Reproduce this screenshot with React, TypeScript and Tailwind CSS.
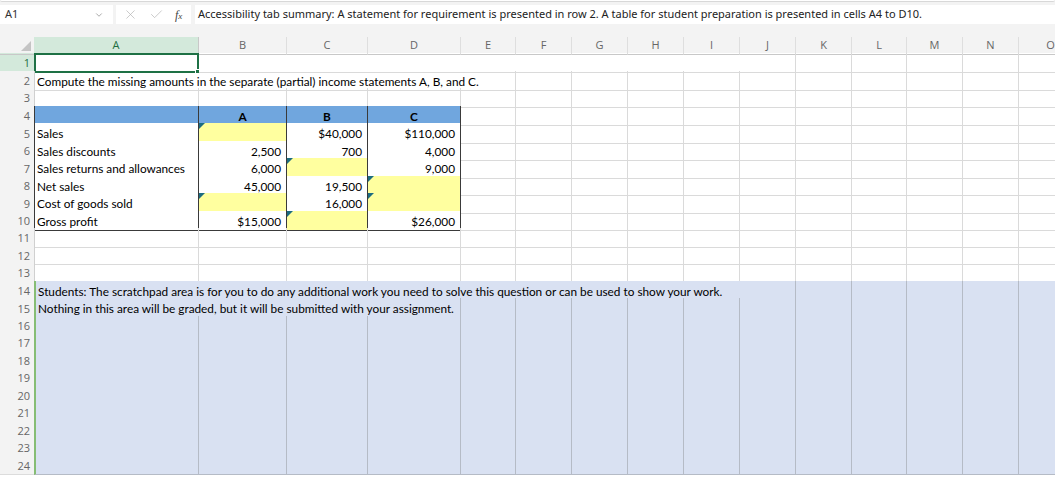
import React from "react";
import { Check, ChevronDown, X } from "lucide-react";

type Kind = "grid" | "sel" | "aboveTable" | "table" | "head" | "yellow" | "aboveScratch" | "scratch";

type Cell = {
  kind: Kind;
  span?: number;
  text?: string;
  align?: "left" | "right" | "center";
  tri?: boolean;
};

const COLS =
  "grid grid-cols-[34px_165px_88px_81px_93px_55px_56px_56px_56px_56px_56px_56px_55px_56px_56px_64px]";

const LETTERS = ["A", "B", "C", "D", "E", "F", "G", "H", "I", "J", "K", "L", "M", "N", "O"];

const SPAN: Record<number, string> = {
  1: "col-span-1",
  4: "col-span-4",
  5: "col-span-5",
  9: "col-span-9",
  10: "col-span-10",
};

const KIND: Record<Kind, string> = {
  grid: "border-r border-b border-[#dadada]",
  sel: "border-2 border-[#1e7145] bg-white",
  aboveTable: "border-r border-b border-[#dadada] border-b-[#3a3a3a]",
  table: "border-r border-b border-[#3a3a3a] bg-white",
  head: "border-r border-b border-[#3a3a3a] bg-[#70a6de] font-bold",
  yellow: "border-r border-b border-[#3a3a3a] bg-[#ffff9f]",
  aboveScratch: "border-r border-b-2 border-[#dadada] border-b-[#7db96b]",
  scratch: "border-r border-b border-[#b5bbc6] bg-[#d9e1f2]",
};

// left edge of column A, per kind
const LEFT: Record<Kind, string> = {
  grid: "border-l border-l-[#d0d0d0]",
  sel: "",
  aboveTable: "border-l border-l-[#d0d0d0]",
  table: "border-l border-l-[#3a3a3a]",
  head: "border-l border-l-[#3a3a3a]",
  yellow: "border-l border-l-[#3a3a3a]",
  aboveScratch: "border-l border-l-[#d0d0d0]",
  scratch: "border-l-2 border-l-[#86bd74]",
};

const fill = (kind: Kind, n: number): Cell[] => Array.from({ length: n }, () => ({ kind }));

const label = (text: string): Cell => ({ kind: "table", text, align: "left" });
const num = (text: string): Cell => ({ kind: "table", text, align: "right" });
const blank = (): Cell => ({ kind: "yellow", tri: true });

const ROWS: Cell[][] = [
  [{ kind: "sel" }, { kind: "grid", span: 9 }, ...fill("grid", 5)],
  [
    {
      kind: "grid",
      span: 5,
      text: "Compute the missing amounts in the separate (partial) income statements A, B, and C.",
    },
    ...fill("grid", 10),
  ],
  [...fill("aboveTable", 4), ...fill("grid", 11)],
  [
    { kind: "head" },
    { kind: "head", text: "A", align: "center" },
    { kind: "head", text: "B", align: "center" },
    { kind: "head", text: "C", align: "center" },
    ...fill("grid", 11),
  ],
  [label("Sales"), blank(), num("$40,000"), num("$110,000"), ...fill("grid", 11)],
  [label("Sales discounts"), num("2,500"), num("700"), num("4,000"), ...fill("grid", 11)],
  [label("Sales returns and allowances"), num("6,000"), blank(), num("9,000"), ...fill("grid", 11)],
  [label("Net sales"), num("45,000"), num("19,500"), blank(), ...fill("grid", 11)],
  [label("Cost of goods sold"), blank(), num("16,000"), blank(), ...fill("grid", 11)],
  [label("Gross profit"), num("$15,000"), blank(), num("$26,000"), ...fill("grid", 11)],
  fill("grid", 15),
  fill("grid", 15),
  fill("aboveScratch", 15),
  [
    {
      kind: "scratch",
      span: 10,
      text: "Students: The scratchpad area is for you to do any additional work you need to solve this question or can be used to show your work.",
    },
    ...fill("scratch", 5),
  ],
  [
    {
      kind: "scratch",
      span: 4,
      text: "Nothing in this area will be graded, but it will be submitted with your assignment.",
    },
    ...fill("scratch", 11),
  ],
  ...Array.from({ length: 9 }, () => fill("scratch", 15)),
];

function Triangle() {
  return (
    <svg className="absolute left-0 top-0" width="6" height="6" viewBox="0 0 6 6">
      <polygon points="0,0 6,0 0,6" fill="#1d6c80" />
    </svg>
  );
}

function SheetCell({ cell, first }: { cell: Cell; first: boolean }) {
  const align =
    cell.align === "right" ? "justify-end pr-[5px]" : cell.align === "center" ? "justify-center" : "justify-start pl-[2px]";
  return (
    <div
      className={`relative flex items-center overflow-visible whitespace-nowrap pt-[2px] ${SPAN[cell.span ?? 1]} ${KIND[cell.kind]} ${first ? LEFT[cell.kind] : ""} ${align}`}
    >
      {cell.tri && <Triangle />}
      {cell.text}
      {cell.kind === "sel" && <span className="absolute -bottom-[3px] -right-[3px] h-[5px] w-[5px] border border-white bg-[#1e7145]" />}
    </div>
  );
}

function FormulaBar() {
  return (
    <div className="h-[37px] bg-[#f3f3f3] font-['Noto_Sans',sans-serif]">
      <div className="h-[2px] rounded-b-[3px] border-b border-[#d8d8d8] bg-white" />
      <div className="mt-[3px] flex h-[19px]">
        <div className="flex w-[113px] items-center justify-between bg-white pl-[5px] pr-[9px] text-[11px] text-[#333]">
          <span>A1</span>
          <ChevronDown size={10} strokeWidth={1.5} color="#777" />
        </div>
        <div className="ml-[3px] flex w-[75px] items-center bg-white pl-[7px] text-[#b3b3b3]">
          <X size={15} strokeWidth={1.1} />
          <Check size={15} strokeWidth={1.1} className="ml-[11px]" />
          <span className="ml-[11px] font-['Liberation_Serif',serif] text-[12px] italic text-[#444]">
            f<span className="text-[9px]">x</span>
          </span>
        </div>
        <div className="ml-[4px] flex flex-1 items-center bg-white pl-[3px] text-[11px] text-[#222]">
          Accessibility tab summary: A statement for requirement is presented in row 2. A table for student preparation is presented in cells A4 to D10.
        </div>
      </div>
    </div>
  );
}

function ColumnHeaders() {
  return (
    <div className={`${COLS} h-[16px] bg-[#f3f3f3] font-['Open_Sans',sans-serif] text-[11px] text-[#666]`}>
      <div className="relative border-b border-[#c8c8c8]">
        <svg className="absolute bottom-[3px] right-[3px]" width="10" height="10" viewBox="0 0 10 10">
          <polygon points="10,0 10,10 0,10" fill="#c4c4c4" />
        </svg>
      </div>
      {LETTERS.map((l, i) => (
        <div
          key={l}
          className={
            i === 0
              ? "flex items-center justify-center border-b border-r border-[#c8c8c8] bg-[#d3e9db] text-[#1e6e42]"
              : "flex items-center justify-center border-b border-r border-[#c8c8c8] border-r-[#dedede]"
          }
        >
          {l}
        </div>
      ))}
    </div>
  );
}

export default function App() {
  return (
    <div className="h-[477px] w-[1055px] overflow-hidden bg-white">
      <FormulaBar />
      <ColumnHeaders />
      <div className="font-['Lato',sans-serif] text-[11.8px] text-black">
        {ROWS.map((row, r) => (
          <div key={r} className={`${COLS} h-[17.5px]`}>
            <div
              className={`flex items-center justify-end border-b border-[#dcdcdc] pr-[4px] pt-[2px] font-['Open_Sans',sans-serif] text-[11px] ${r === 0 ? "bg-[#d3e9db] text-[#1e6e42]" : "bg-[#f3f3f3] text-[#666]"}`}
            >
              {r + 1}
            </div>
            {row.map((cell, c) => (
              <SheetCell key={c} cell={cell} first={c === 0} />
            ))}
          </div>
        ))}
      </div>
    </div>
  );
}
